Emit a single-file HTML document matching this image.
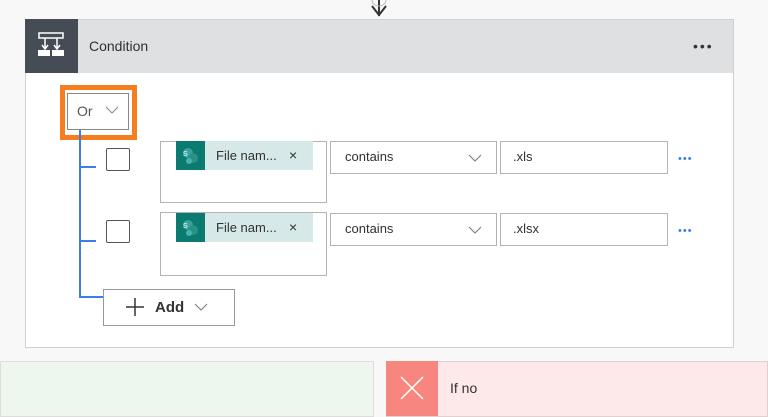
<!DOCTYPE html>
<html><head><style>
*{box-sizing:border-box;margin:0;padding:0}
body{width:768px;height:416px;background:#f8f8f8;position:relative;overflow:hidden;font-family:"Liberation Sans",sans-serif;color:#323130}
.a{position:absolute}
.box{position:absolute;background:#fff;border:1px solid #b3b3b3}
.sel{font-size:13px;padding-left:14px;line-height:30px}
.tok{position:absolute;background:#d7e8e8;height:29px}
.tok .ic{position:absolute;left:0;top:0;width:29px;height:29px;background:#0b7a70}
.tok .t{position:absolute;left:40px;top:7px;font-size:13px}
.tok .x{position:absolute;left:113px;top:6px;font-size:14px}
</style></head><body>
<svg class="a" style="left:366px;top:0" width="26" height="20"><path d="M6 6 L13 15 L20 6 M13 0 V16" stroke="#333" stroke-width="2" fill="none"/><path d="M6 0 a7 6 0 0 0 14 0" stroke="#bbb" fill="none"/></svg>
<div class="a" style="left:25px;top:19px;width:709px;height:329px;background:#fff;border:1px solid #d0d0d0"></div>
<div class="a" style="left:25px;top:19px;width:709px;height:54px;background:#dfe0e1;border:1px solid #d0d0d0;border-bottom:none"></div>
<div class="a" style="left:25px;top:19px;width:53px;height:54px;background:#464c56"></div>
<svg class="a" style="left:37px;top:32px" width="30" height="28"><rect x="2" y="1" width="24" height="5" stroke="#fff" stroke-width="1.5" fill="none"/><path d="M8 6 V16 M5 13 L8 17 L11 13 M20 6 V16 M17 13 L20 17 L23 13" stroke="#fff" stroke-width="1.5" fill="none"/><rect x="1" y="18" width="12" height="6" fill="#fff"/><rect x="15" y="18" width="12" height="6" fill="#fff"/></svg>
<div class="a" style="left:89px;top:38px;font-size:14px">Condition</div>
<div class="a" style="left:693px;top:38px;font-size:14px;letter-spacing:2px;color:#333">•••</div>
<div class="a" style="left:60px;top:85px;width:77px;height:55px;border:5px solid #f57f20"></div>
<div class="box" style="left:67px;top:93px;width:62px;height:37px;border-color:#888"></div>
<div class="a" style="left:77px;top:103px;font-size:14px;color:#555">Or</div>
<svg class="a" style="left:105px;top:106px" width="14" height="8"><path d="M1 1 L7 7 L13 1" stroke="#888" fill="none"/></svg>
<div class="a" style="left:79px;top:130px;width:2px;height:168px;background:#3a7fe8"></div>
<div class="a" style="left:79px;top:166px;width:17px;height:2px;background:#3a7fe8"></div>
<div class="a" style="left:79px;top:240px;width:17px;height:2px;background:#3a7fe8"></div>
<div class="a" style="left:79px;top:296px;width:25px;height:2px;background:#3a7fe8"></div>
<div class="a" style="left:106px;top:148px;width:24px;height:23px;border:1.5px solid #555;border-radius:2px"></div>
<div class="a" style="left:106px;top:220px;width:24px;height:23px;border:1.5px solid #555;border-radius:2px"></div>

<div class="box" style="left:160px;top:141px;width:167px;height:62px"></div>
<div class="tok" style="left:176px;top:141px;width:137px"><div class="ic"><svg width="29" height="29"><circle cx="12" cy="12" r="5" fill="#3aa39a"/><circle cx="17" cy="17" r="5" fill="#2a9187"/><circle cx="13" cy="20" r="3" fill="#47b3a8"/><text x="7" y="15" font-size="7" fill="#fff" font-family="Liberation Sans">S</text></svg></div><div class="t">File nam...</div><div class="x">×</div></div>
<div class="box sel" style="left:330px;top:141px;width:167px;height:33px">contains</div>
<svg class="a" style="left:468px;top:154px" width="14" height="8"><path d="M1 1 L7 7 L13 1" stroke="#777" fill="none"/></svg>
<div class="box sel" style="left:500px;top:141px;width:168px;height:33px;padding-left:12px">.xls</div>
<div class="a" style="left:678px;top:153px;font-size:11px;letter-spacing:1px;color:#3a7fe8">•••</div>

<div class="box" style="left:160px;top:212px;width:167px;height:64px"></div>
<div class="tok" style="left:176px;top:213px;width:137px"><div class="ic"><svg width="29" height="29"><circle cx="12" cy="12" r="5" fill="#3aa39a"/><circle cx="17" cy="17" r="5" fill="#2a9187"/><circle cx="13" cy="20" r="3" fill="#47b3a8"/><text x="7" y="15" font-size="7" fill="#fff" font-family="Liberation Sans">S</text></svg></div><div class="t">File nam...</div><div class="x">×</div></div>
<div class="box sel" style="left:330px;top:213px;width:167px;height:33px">contains</div>
<svg class="a" style="left:468px;top:226px" width="14" height="8"><path d="M1 1 L7 7 L13 1" stroke="#777" fill="none"/></svg>
<div class="box sel" style="left:500px;top:213px;width:168px;height:33px;padding-left:12px">.xlsx</div>
<div class="a" style="left:678px;top:225px;font-size:11px;letter-spacing:1px;color:#3a7fe8">•••</div>

<div class="box" style="left:103px;top:289px;width:132px;height:37px;border-color:#999"></div>
<svg class="a" style="left:125px;top:297px" width="20" height="20"><path d="M10 1 V19 M1 10 H19" stroke="#333" stroke-width="1.5"/></svg>
<div class="a" style="left:155px;top:299px;font-size:15px;font-weight:bold;color:#333">Add</div>
<svg class="a" style="left:194px;top:303px" width="14" height="8"><path d="M1 1 L7 7 L13 1" stroke="#777" fill="none"/></svg>

<div class="a" style="left:0;top:361px;width:374px;height:56px;background:#eef7ee;border:1px solid #ddd"></div>
<div class="a" style="left:386px;top:361px;width:382px;height:56px;background:#fde9e9;border:1px solid #e0d0d0"></div>
<div class="a" style="left:386px;top:361px;width:52px;height:55px;background:#f7867f"></div>
<svg class="a" style="left:398px;top:374px" width="28" height="28"><path d="M3 3 L25 25 M25 3 L3 25" stroke="#fff" stroke-width="1.5"/></svg>
<div class="a" style="left:450px;top:380px;font-size:14px">If no</div>
</body></html>
